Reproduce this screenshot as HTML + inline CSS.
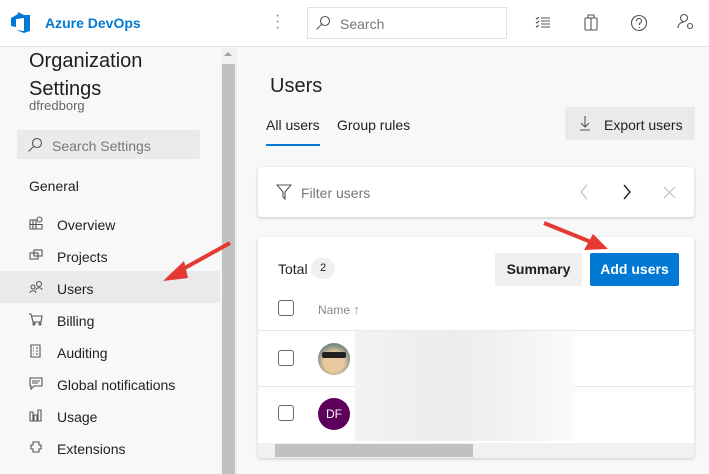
<!DOCTYPE html>
<html><head><style>
*{box-sizing:border-box;margin:0;padding:0}
body{width:709px;height:474px;overflow:hidden;background:#f8f8f8;font-family:"Liberation Sans",sans-serif;color:#201f1e;position:relative}
.a{position:absolute}
.ic{position:absolute;stroke:#555;fill:none;stroke-width:1.1}
.nav{position:absolute;left:57px;font-size:14px;color:#201f1e}
</style></head><body>
<div class="a" style="left:0;top:0;width:709px;height:47px;background:#fff;border-bottom:1px solid #e0e0e0"></div>
<svg class="a" style="left:10px;top:12px" width="22" height="22" viewBox="0 0 22 22"><path d="M1 6 L8 2 L8 0 L14 3 L20 3 L20 19 L14 21 L6 18 L14 19 L14 6 L6 7 L6 15 L1 14Z" fill="#0078d4"/></svg>
<div class="a" style="left:45px;top:15px;font-size:14px;font-weight:bold;color:#0078d4">Azure DevOps</div>
<div class="a" style="left:275px;top:13px;color:#888;font-size:16px;line-height:6px">·<br>·<br>·</div>
<div class="a" style="left:307px;top:7px;width:200px;height:32px;border:1px solid #e0e0e0;background:#fff"></div>
<svg class="ic" style="left:315px;top:15px" width="16" height="16"><circle cx="10" cy="6" r="4.5"/><path d="M7 9 L1.5 14.5"/></svg>
<div class="a" style="left:340px;top:16px;font-size:14px;color:#777">Search</div>
<svg class="ic" style="left:535px;top:15px" width="16" height="16"><path d="M6 3h9M6 6h9M6 9h9M6 12h9M1 3l1 1 2-2M1 7l1 1 2-2M1 11l1 1 2-2"/></svg>
<svg class="ic" style="left:583px;top:13px" width="16" height="18"><rect x="2" y="5" width="12" height="12" rx="1"/><path d="M5 5V2h6v3M8 5v12"/></svg>
<svg class="ic" style="left:630px;top:14px" width="18" height="18"><circle cx="9" cy="9" r="7.5"/><path d="M6.5 7a2.5 2.5 0 1 1 3 2.4v1.6M9.5 13v1"/></svg>
<svg class="ic" style="left:677px;top:13px" width="18" height="18"><circle cx="7" cy="5" r="3.5"/><path d="M1 15c0-4 3-6 6-6"/><circle cx="13" cy="13" r="2.5"/></svg>

<div class="a" style="left:29px;top:47px;font-size:20px;line-height:28px;color:#1e1e1e">Organization</div>
<div class="a" style="left:29px;top:75px;font-size:20px;line-height:28px;color:#1e1e1e">Settings</div>
<div class="a" style="left:29px;top:98px;font-size:13px;color:#666">dfredborg</div>
<div class="a" style="left:17px;top:130px;width:183px;height:29px;background:#eaeaea;border-radius:2px"></div>
<svg class="ic" style="left:27px;top:137px" width="16" height="16"><circle cx="10" cy="6" r="4.5"/><path d="M7 9 L1.5 14.5"/></svg>
<div class="a" style="left:52px;top:138px;font-size:14px;color:#777">Search Settings</div>
<div class="a" style="left:29px;top:178px;font-size:14px">General</div>
<div class="a" style="left:0;top:271px;width:220px;height:32px;background:#eaeaea"></div>
<div class="nav" style="top:217px">Overview</div>
<div class="nav" style="top:249px">Projects</div>
<div class="nav" style="top:281px">Users</div>
<div class="nav" style="top:313px">Billing</div>
<div class="nav" style="top:345px">Auditing</div>
<div class="nav" style="top:377px">Global notifications</div>
<div class="nav" style="top:409px">Usage</div>
<div class="nav" style="top:441px">Extensions</div>
<svg class="ic" style="left:29px;top:216px" width="14" height="14"><path d="M1 4h6v9H1zM1 8.5h12V13H7M4 4v9"/><circle cx="10.5" cy="3.5" r="2.5"/></svg>
<svg class="ic" style="left:29px;top:248px" width="14" height="14"><rect x="5" y="2" width="8" height="6"/><rect x="1" y="5" width="8" height="6"/></svg>
<svg class="ic" style="left:29px;top:280px" width="14" height="14"><circle cx="4" cy="7" r="2"/><circle cx="10" cy="4" r="2.5"/><path d="M1 13c0-3 6-3 6 0M7 10c0-3 6-3 6 0"/></svg>
<svg class="ic" style="left:29px;top:312px" width="14" height="14"><path d="M0 2h2l2 8h8l1-6H3"/><circle cx="5" cy="12" r="1"/><circle cx="11" cy="12" r="1"/></svg>
<svg class="ic" style="left:29px;top:344px" width="14" height="14"><path d="M2 1h9v12H2zM4 4h1M7 4h2M4 7h1M7 7h2M4 10h1M7 10h2"/></svg>
<svg class="ic" style="left:29px;top:376px" width="14" height="14"><path d="M1 2h12v8H5l-3 3v-3H1zM3 5h8M3 7h6"/></svg>
<svg class="ic" style="left:29px;top:408px" width="14" height="14"><path d="M1 4h3v9H1zM5 7h3v6H5zM9 2h3v11H9z"/></svg>
<svg class="ic" style="left:29px;top:440px" width="14" height="14"><path d="M4 2h6v3h2v4h-2v3H4V9H2V5h2z"/></svg>
<div class="a" style="left:221px;top:48px;width:16px;height:426px;background:#f1f1f1"></div>
<div class="a" style="left:222px;top:64px;width:13px;height:410px;background:#c1c1c1"></div>
<div class="a" style="left:224px;top:52px;width:0;height:0;border:4px solid transparent;border-bottom-color:#a3a3a3;border-top:0"></div>

<div class="a" style="left:270px;top:75px;font-size:20px">Users</div>
<div class="a" style="left:266px;top:117px;font-size:14px">All users</div>
<div class="a" style="left:266px;top:144px;width:54px;height:2px;background:#0078d4"></div>
<div class="a" style="left:337px;top:117px;font-size:14px">Group rules</div>
<div class="a" style="left:565px;top:107px;width:130px;height:33px;background:#eaeaea;border-radius:2px"></div>
<svg class="ic" style="left:578px;top:115px" width="14" height="16"><path d="M7 1v11M3 8l4 4 4-4M2 15h10"/></svg>
<div class="a" style="left:604px;top:117px;font-size:14px">Export users</div>

<div class="a" style="left:258px;top:167px;width:436px;height:50px;background:#fff;border-radius:3px;box-shadow:0 1px 3px rgba(0,0,0,.2)"></div>
<svg class="ic" style="left:276px;top:184px" width="16" height="16"><path d="M1 1h14L9 8v7L7 13V8z"/></svg>
<div class="a" style="left:301px;top:185px;font-size:14px;color:#777">Filter users</div>
<svg class="ic" style="left:578px;top:184px;stroke:#bbb" width="12" height="16"><path d="M9 1L3 8l6 7"/></svg>
<svg class="ic" style="left:621px;top:184px;stroke:#222;stroke-width:1.4" width="12" height="16"><path d="M3 1l6 7-6 7"/></svg>
<svg class="ic" style="left:663px;top:186px;stroke:#bbb" width="13" height="13"><path d="M1 1l11 11M12 1L1 12"/></svg>

<div class="a" style="left:258px;top:237px;width:436px;height:221px;background:#fff;border-radius:3px;box-shadow:0 1px 3px rgba(0,0,0,.2);overflow:hidden">
 <div class="a" style="left:20px;top:24px;font-size:14px">Total</div>
 <div class="a" style="left:53px;top:21px;width:24px;height:21px;border-radius:11px;background:#f0f0f0;font-size:11px;text-align:center;line-height:21px">2</div>
 <div class="a" style="left:237px;top:16px;width:87px;height:33px;background:#efefef;font-size:14px;font-weight:bold;text-align:center;line-height:33px;border-radius:2px">Summary</div>
 <div class="a" style="left:332px;top:16px;width:89px;height:33px;background:#0078d4;color:#fff;font-size:14px;font-weight:bold;text-align:center;line-height:33px;border-radius:2px">Add users</div>
 <div class="a" style="left:20px;top:63px;width:16px;height:16px;border:1px solid #666;border-radius:3px"></div>
 <div class="a" style="left:60px;top:65px;font-size:12px;color:#888">Name <span style="color:#8aa0b8;font-size:13px">↑</span></div>
 <div class="a" style="left:0;top:93px;width:436px;height:1px;background:#e8e8e8"></div>
 <div class="a" style="left:0;top:149px;width:436px;height:1px;background:#e8e8e8"></div>
 <div class="a" style="left:97px;top:94px;width:220px;height:110px;background:linear-gradient(90deg,#f3f3f3,#ececec 45%,#fafafa)"></div>
 <div class="a" style="left:20px;top:113px;width:16px;height:16px;border:1px solid #666;border-radius:3px"></div>
 <div class="a" style="left:20px;top:168px;width:16px;height:16px;border:1px solid #666;border-radius:3px"></div>
 <div class="a" style="left:60px;top:106px;width:32px;height:32px;border-radius:50%;background:radial-gradient(circle at 50% 60%,#e8c9a0 40%,#7a8a80 70%)"></div>
 <div class="a" style="left:64px;top:115px;width:24px;height:6px;background:#222;border-radius:2px"></div>
 <div class="a" style="left:60px;top:161px;width:32px;height:32px;border-radius:50%;background:#5c005c;color:#fff;font-size:12px;text-align:center;line-height:32px">DF</div>
 <div class="a" style="left:0;top:206px;width:436px;height:15px;background:#f1f1f1"></div>
 <div class="a" style="left:17px;top:207px;width:198px;height:13px;background:#c1c1c1"></div>
</div>

<svg class="a" style="left:160px;top:240px" width="72" height="45"><path d="M70 3 L12 35" stroke="#e53935" stroke-width="4"/><path d="M3 41 L24 21 L28 38Z" fill="#e53935"/></svg>
<svg class="a" style="left:540px;top:218px" width="72" height="34"><path d="M4 5 L56 26" stroke="#e53935" stroke-width="4"/><path d="M68 31 L44 32 L53 16Z" fill="#e53935"/></svg>
</body></html>
